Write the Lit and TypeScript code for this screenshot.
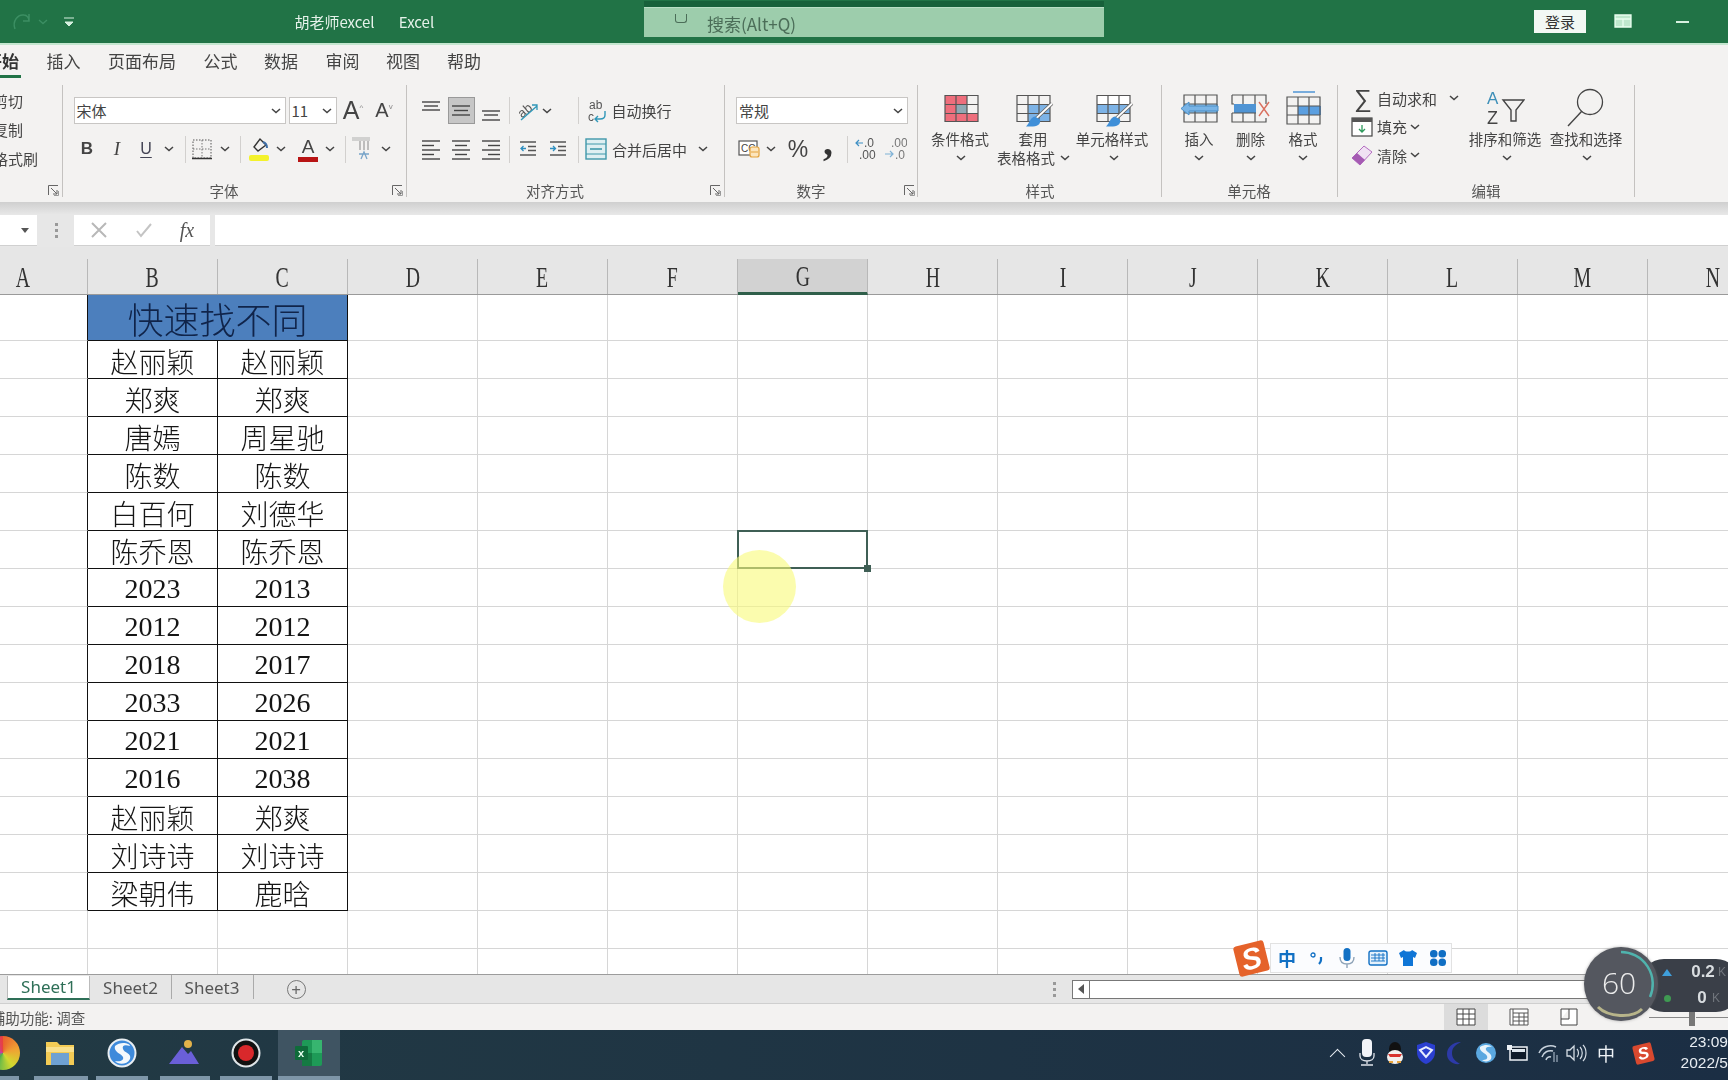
import { LitElement, html, svg, css } from "lit";
import { customElement } from "lit/decorators.js";

type Item = [number, number, unknown];

// lays items out in a flex row, each centred on a page x
const place = (origin: number, items: Item[]) => {
  let x = origin;
  return items.map(([c, w, t]) => {
    const gap = c - w / 2 - x;
    x = c + w / 2;
    return html`<span class="slot" style="margin-left:${gap}px;width:${w}px">${t}</span>`;
  });
};

const chev = html`<svg width="10" height="6" viewBox="0 0 10 6"><path d="M1 1l4 3.6L9 1" fill="none" stroke="#444" stroke-width="1.5"/></svg>`;
const launcher = html`<svg width="11" height="11" viewBox="0 0 11 11"><path d="M.5 10V.5H10M3 3l6 6M9 5v4H5" fill="none" stroke="#666"/><path d="M10.5 6v4.500H6" fill="none" stroke="#999"/></svg>`;

const lines = (ys: number[], xs: [number, number][], color = "#444") => html`<svg width="24" height="25" viewBox="0 0 24 25">
  ${ys.map((y, i) => svg`<path d="M${xs[i][0]} ${y}H${xs[i][1]}" stroke=${color} stroke-width="1.4"/>`)}
</svg>`;
const full: [number, number] = [3, 21];
const alTop = lines([4, 8, 12], [full, [5, 19], full]);
const alMid = lines([8, 12.5, 17], [full, [5, 19], full]);
const alBot = lines([13, 17, 22], [full, [5, 19], full]);
const alLeft = lines([4, 8.500, 13, 17.500, 22], [[3, 21], [3, 15], [3, 21], [3, 15], [3, 21]]);
const alCenter = lines([4, 8.500, 13, 17.500, 22], [[3, 21], [6, 18], [3, 21], [6, 18], [3, 21]]);
const alRight = lines([4, 8.500, 13, 17.500, 22], [[3, 21], [9, 21], [3, 21], [9, 21], [3, 21]]);
const indent = (flip: boolean) => html`<svg width="22" height="24" viewBox="0 0 22 24">
  <path d="M3 5H19M11 9.500H19M11 13.500H19M3 18H19" stroke="#555" stroke-width="1.300"/>
  <path d=${flip ? "M3 11.500H8M6 9l2.500 2.500L6 14" : "M9 11.500H4M6.500 9L4 11.500 6.500 14"} fill="none" stroke="#2f8fc0" stroke-width="1.300"/>
</svg>`;

const grid = (w = 35, h = 28, fills: unknown = "", over: unknown = "") => html`<svg class="spill" width=${w} height=${h} viewBox="0 0 35 28">
  ${fills}
  <path d="M1 1H34V27H1ZM1 10H34M1 19H34M12 1V27M23 1V27" fill="none" stroke="#555" stroke-width="1.200"/>
  ${over}
</svg>`;
const brush = svg`<path d="M36 9L19 25" stroke="#666" stroke-width="3.500"/><path d="M36 9L19 25" stroke="#fff" stroke-width="1.800"/><path d="M19 22c-5 1-5 6-9 10h7c6 0 8-4 7-7z" fill="#3f8fd8"/>`;

const condIcon = grid(35, 29, svg`<rect x="1" y="1" width="22" height="9" fill="#ee6e7c"/><rect x="1" y="10" width="11" height="9" fill="#ee6e7c"/><rect x="12" y="10" width="11" height="9" fill="#8fa9b4"/><rect x="1" y="19" width="33" height="8" fill="#ee6e7c"/>`);
const tableIcon = grid(35, 29, svg`<rect x="12" y="10" width="22" height="17" fill="#7db3e6"/>`, brush);
const cellIcon = grid(35, 29, svg`<rect x="1" y="1" width="33" height="18" fill="#7db3e6"/><rect x="1" y="1" width="33" height="9" fill="#fff"/><rect x="12" y="10" width="22" height="9" fill="#7db3e6"/>`, brush);
const insertIcon = html`<svg width="39" height="29" viewBox="0 0 39 29">
  <rect x="4" y="10" width="34" height="9" fill="#8dc0ea"/>
  <path d="M4 1H37V28H4ZM4 10H37M4 19H37M15 1V28M26 1V28" fill="none" stroke="#555" stroke-width="1.200"/>
  <path d="M1 14.500L9 8v4H38v5H9v4z" fill="#79b4e6" stroke="#4c8fc6"/>
</svg>`;
const deleteIcon = html`<svg width="39" height="29" viewBox="0 0 39 29">
  <rect x="3" y="10" width="22" height="9" fill="#4f94d4"/>
  <path d="M1 1H35V10M1 1V10H3M1 19V28H35V24M1 19H25M12 1V10M12 19V28M24 1V10M24 19V28" fill="none" stroke="#555" stroke-width="1.200"/>
  <path d="M28 8L38 22M38 8L28 22" stroke="#d9705f" stroke-width="1.400"/>
</svg>`;
const formatIcon = html`<svg width="35" height="35" viewBox="0 0 35 35">
  <path d="M7 1H29" stroke="#4f94d4" stroke-width="1.500"/>
  <rect x="12" y="15" width="23" height="9" fill="#5b9fe0"/>
  <path d="M1 6H34V33H1ZM1 15H34M1 24H34M12 6V33M23 6V33" fill="none" stroke="#555" stroke-width="1.200"/>
</svg>`;

const bucket = html`<svg width="26" height="28" viewBox="0 0 26 28">
  <path d="M8 12l6-8 6 6-8 6z" fill="none" stroke="#333" stroke-width="1.400"/>
  <path d="M17 7c3 1 4 3 4 6" fill="none" stroke="#3f6fa8" stroke-width="2"/>
  <rect x="3" y="20" width="20" height="6" rx="2" fill="#f4f22c"/>
</svg>`;
const borders = html`<svg width="22" height="22" viewBox="0 0 22 22">
  <path d="M2 2H20V20H2Z" fill="none" stroke="#555" stroke-dasharray="1.500 1.500"/>
  <path d="M11 2V20M2 11H20" stroke="#777" stroke-dasharray="1.500 1.500"/>
  <path d="M1 20.500H21" stroke="#333" stroke-width="1.500"/>
</svg>`;
const phonetic = html`<svg width="32" height="26" viewBox="0 0 32 26">
  <path d="M4 3H22" stroke="#bbb" stroke-width="4" opacity=".6"/>
  <path d="M12 5V14M16 5V14M20 5V14" stroke="#888"/>
  <path d="M11 18H21M13 23L16 16L19 23" fill="none" stroke="#7aa5c9" stroke-width="1.300"/>
</svg>`;
const orient = html`<svg width="24" height="24" viewBox="0 0 24 24">
  <text x="3" y="17" font-size="13" fill="#555" transform="rotate(-40 8 14)">ab</text>
  <path d="M5 21L21 7M16 6h5v5" fill="none" stroke="#2f97b8" stroke-width="1.300"/>
</svg>`;
const wrapIcon = html`<svg width="20" height="24" viewBox="0 0 20 24">
  <text x="2" y="10" font-size="12" fill="#555">ab</text>
  <text x="1" y="22" font-size="12" fill="#555">c</text>
  <path d="M18 12v4c0 3-2 4-5 4H8M11 17l-3 3 3 3" fill="none" stroke="#2f97b8" stroke-width="1.400"/>
</svg>`;
const mergeIcon = html`<svg width="22" height="22" viewBox="0 0 22 22">
  <rect x="1" y="1" width="20" height="20" fill="#dfeff2" stroke="#3f98aa" stroke-width="1.400"/>
  <path d="M1 6H21M1 16H21" stroke="#3f98aa"/><path d="M5 11H17" stroke="#3f98aa" stroke-width="1.600"/>
</svg>`;
const moneyIcon = html`<svg width="22" height="20" viewBox="0 0 22 20">
  <rect x="1" y="2" width="18" height="14" fill="#fff" stroke="#555" stroke-width="1.200"/>
  <text x="3" y="13" font-size="10" fill="#444">CC</text>
  <rect x="12" y="8" width="9" height="10" rx="2" fill="#fce5bd" stroke="#e3a13b" stroke-width="1.200"/>
  <path d="M13 13H20" stroke="#e3a13b"/>
</svg>`;
const incDec = html`<svg width="24" height="24" viewBox="0 0 24 24">
  <text x="10" y="10" font-size="12" fill="#555">.0</text><text x="5" y="22" font-size="12" fill="#555">.00</text>
  <path d="M9 6H2M5 3L2 6l3 3" fill="none" stroke="#3e8fc4" stroke-width="1.200"/>
</svg>`;
const decDec = html`<svg width="24" height="24" viewBox="0 0 24 24">
  <text x="8" y="10" font-size="12" fill="#777">.00</text><text x="12" y="22" font-size="12" fill="#777">.0</text>
  <path d="M2 17H10M7 14l3 3-3 3" fill="none" stroke="#7fb2d6" stroke-width="1.200"/>
</svg>`;
const fillIcon = html`<svg width="22" height="20" viewBox="0 0 22 20">
  <rect x="1" y="1" width="20" height="18" fill="#fff" stroke="#444" stroke-width="1.200"/><rect x="1" y="1" width="20" height="4" fill="#555"/>
  <path d="M11 8V15M8 12l3 3 3-3" fill="none" stroke="#2d9a5b" stroke-width="1.300"/>
</svg>`;
const eraser = html`<svg width="22" height="22" viewBox="0 0 22 22">
  <path d="M1 14L13 2l8 6L9 21z" fill="#f0e2f3" stroke="#b36cc0"/><path d="M1 14l5-5 8 7-5 5z" fill="#a55bb3"/>
</svg>`;
const sortIcon = html`<svg width="38" height="37" viewBox="0 0 38 37">
  <text x="0" y="14" font-size="17" fill="#3d8fb8">A</text>
  <text x="0" y="34" font-size="18" fill="#444">Z</text>
  <path d="M16 10H37L29 20V31H24V20Z" fill="none" stroke="#444" stroke-width="1.400"/>
</svg>`;
const lens = html`<svg width="38" height="40" viewBox="0 0 38 40">
  <circle cx="24" cy="14" r="12.500" fill="none" stroke="#444" stroke-width="1.300"/><path d="M16 23L2 38" stroke="#444" stroke-width="1.400"/>
</svg>`;

const folder = html`<svg width="30" height="28" viewBox="0 0 30 28"><path d="M1 3h11l3 3h14v20H1z" fill="#f3cb55"/><rect x="6" y="14" width="18" height="12" fill="#6fa1d2"/><path d="M1 8H29V13H1z" fill="#f9e08c"/></svg>`;
const browser = html`<svg width="30" height="32" viewBox="0 0 30 32"><circle cx="15" cy="16" r="13.500" fill="#3e8adb" stroke="#e9eef2" stroke-width="2"/><path d="M8 9c5-5 15-3 15 0-6-2-8 0-7 3 1 4 9 4 7 10-3 6-12 6-15 2 6 1 9-1 8-4S6 15 8 9z" fill="#f4f8fc"/></svg>`;
const mountain = html`<svg width="30" height="30" viewBox="0 0 30 30"><path d="M0 26L13 9l6 7 3-3 8 13z" fill="#6a5fd8"/><circle cx="19" cy="6" r="4" fill="#e2b14a"/></svg>`;
const record = html`<svg width="30" height="30" viewBox="0 0 30 30"><circle cx="15" cy="15" r="13.500" fill="#111" stroke="#dfe5e8" stroke-width="2"/><circle cx="15" cy="15" r="8" fill="#d9282b"/></svg>`;
const excel = html`<svg width="30" height="30" viewBox="0 0 30 30"><rect x="8" y="2" width="20" height="26" rx="2" fill="#1e9a57"/><path d="M18 2H28V15H18z" fill="#37b56f"/><path d="M8 15H18V28H8z" fill="#157a43"/><rect x="1" y="8" width="13" height="14" rx="1" fill="#0f6b3a"/><text x="4" y="19" font-size="11" font-weight="700" fill="#e9fff1">x</text></svg>`;

const trayMic = html`<svg width="16" height="30" viewBox="0 0 16 30"><rect x="3" y="1" width="10" height="18" rx="4" fill="#f2f4f8"/><path d="M1 15v3c0 3 3 5 7 5s7-2 7-5v-3M8 23v3M2 27H14" fill="none" stroke="#dfe3ea" stroke-width="1.300"/></svg>`;
const qq = html`<svg width="20" height="24" viewBox="0 0 20 24"><ellipse cx="10" cy="8" rx="6" ry="7" fill="#111"/><ellipse cx="10" cy="16" rx="8" ry="7" fill="#f4f0ee"/><path d="M3 13h14l-2 3H5z" fill="#d8332e"/><path d="M8 21h-4M16 21h-4" stroke="#e7a33b" stroke-width="2"/></svg>`;
const shield = html`<svg width="22" height="24" viewBox="0 0 22 24"><path d="M11 1l9 3v7c0 6-4 10-9 12C6 21 2 17 2 11V4z" fill="#2b3fd0"/><path d="M5 9l6 7 6-7-6-3z" fill="none" stroke="#e8ecff" stroke-width="2"/></svg>`;
const moon = html`<svg width="24" height="26" viewBox="0 0 24 26"><path d="M16 2C7 2 2 8 2 14s5 11 13 10c-5-3-8-6-8-11s3-8 9-11z" fill="#2d3aa8"/></svg>`;
const globe = html`<svg width="24" height="24" viewBox="0 0 24 24"><circle cx="12" cy="12" r="10" fill="#5ba8e0"/><path d="M6 6c5-3 10-2 12 0-5-1-7 1-6 3 2 3 7 4 5 9-2 3-7 3-9 1 4 0 6-1 5-4S5 11 6 6z" fill="#eaf4fb"/></svg>`;
const card = html`<svg width="22" height="16" viewBox="0 0 22 16"><rect x="4" y="2" width="17" height="13" fill="#0f1a28" stroke="#eef2f6" stroke-width="1.500"/><rect x="6" y="4" width="13" height="3" fill="#dfe6ec"/><rect x="1" y="0" width="5" height="5" fill="#eef2f6"/></svg>`;
const wifi = html`<svg width="22" height="20" viewBox="0 0 22 20"><path d="M2 10a13 13 0 0 1 17-6M5 14a9 9 0 0 1 11-6M9 17a4 4 0 0 1 5-3" fill="none" stroke="#c8d2dc" stroke-width="1.500"/><path d="M17 9V19M20 12V19" stroke="#8595a5" stroke-width="1.500"/></svg>`;
const speaker = html`<svg width="22" height="20" viewBox="0 0 22 20"><path d="M2 7H5L9 3V17L5 13H2Z" fill="none" stroke="#d4dce4" stroke-width="1.300"/><path d="M12 6c2 2 2 6 0 8M15 4c3 3 3 9 0 12M18 2c4 4 4 12 0 16" fill="none" stroke="#d4dce4" stroke-width="1.200"/></svg>`;

const logoS = (size: string) => html`<span class="s-logo ${size}"><span>S</span></span>`;

const COLS = "ABCDEFGHIJKLMN".split("");
const ROWS: [string, string][] = [
  ["赵丽颖", "赵丽颖"],
  ["郑爽", "郑爽"],
  ["唐嫣", "周星驰"],
  ["陈数", "陈数"],
  ["白百何", "刘德华"],
  ["陈乔恩", "陈乔恩"],
  ["2023", "2013"],
  ["2012", "2012"],
  ["2018", "2017"],
  ["2033", "2026"],
  ["2021", "2021"],
  ["2016", "2038"],
  ["赵丽颖", "郑爽"],
  ["刘诗诗", "刘诗诗"],
  ["梁朝伟", "鹿晗"],
];

@customElement("app-root")
export class AppRoot extends LitElement {
  static styles = css`
    :host {
      display: block;
      width: 1728px;
      height: 1080px;
      overflow: hidden;
      position: relative;
      background: #fff;
      font-family: "Noto Sans CJK SC", "Liberation Sans", sans-serif;
      color: #444;
    }
    svg text { font-family: "Liberation Sans", sans-serif; }
    .spill { overflow: visible; }
    .app { display: flex; flex-direction: column; width: 1728px; height: 1080px; filter: blur(.3px); }
    .strip { display: flex; align-items: center; flex: none; }
    .slot { display: flex; align-items: center; justify-content: center; flex: none; white-space: nowrap; position: relative; }

    .titlebar { height: 43px; background: #217346; color: #e6f2ea; font-size: 15px; flex: none; }
    .edge { height: 2px; background: #c4e6cf; flex: none; }
    .search { height: 30px; width: 100%; background: #9dcdac; color: #4b6d58; font-size: 17px; justify-content: flex-start; display: flex; align-items: center; box-shadow: 0 -6px 0 #17603a; border-top: 1px solid #b9dec5; box-sizing: border-box; }
    .search span { margin-left: 20px; padding-top: 3px; }
    .search i { display: block; width: 10px; height: 8px; border: 1.500px solid #4b6d58; border-top: 0; margin: -8px 0 0 31px; border-radius: 0 0 3px 3px; }
    .login { width: 100%; height: 23px; background: #f2f8f4; color: #333; display: flex; align-items: center; justify-content: center; }

    .ribbon { height: 157px; background: #f3f2f1; flex: none; }
    .tabs { height: 30px; font-size: 17px; color: #444; }
    .tab-on { font-weight: 700; color: #333; position: relative; }
    .tab-on::after { content: ""; position: absolute; left: 0; right: -2px; bottom: -5px; height: 3px; background: #217346; }
    .groups { display: flex; margin-top: 10px; height: 112px; font-size: 15px; }
    .group { display: flex; flex-direction: column; flex: none; box-sizing: border-box; height: 112px; border-right: 1px solid #c4c2c0; }
    .foot { height: 16px; margin-top: auto; margin-bottom: -1px; font-size: 14.500px; color: #555; }
    .clip { display: flex; flex-direction: column; margin-left: -7px; gap: 9px; padding-top: 6px; line-height: 20px; }
    .r1 { height: 27px; margin-top: 12px; }
    .r2 { height: 26px; margin-top: 12px; }
    .sel { box-sizing: border-box; width: 100%; height: 27px; background: #fff; border: 1px solid #c8c6c4; display: flex; align-items: center; justify-content: space-between; padding: 0 4px 0 2px; color: #444; font-size: 15px; }
    .on { width: 27px; height: 27px; background: #c6c6c6; border: 1px solid #999; box-sizing: border-box; display: flex; align-items: center; justify-content: center; }
    .vsep { display: block; width: 1px; height: 27px; background: #d2d0ce; }
    .big-a { font-family: "Liberation Sans", sans-serif; font-size: 25px; color: #444; }
    .small-a { font-family: "Liberation Sans", sans-serif; font-size: 20px; color: #444; }
    sup { font-size: 8px; line-height: 0; color: #888; }
    .b { font-family: "Liberation Sans", sans-serif; font-weight: 700; font-size: 17px; color: #444; }
    .i { font-family: "Liberation Serif", serif; font-style: italic; font-size: 19px; color: #444; }
    .u { font-family: "Liberation Sans", sans-serif; font-size: 16px; color: #445; text-decoration: underline; text-underline-offset: 3px; }
    .color-a { display: flex; flex-direction: column; align-items: center; font-family: "Liberation Sans", sans-serif; font-size: 19px; line-height: 20px; width: 22px; color: #444; }
    .color-a i { display: block; width: 20px; height: 5px; background: #b81414; }
    .pct { font-family: "Liberation Sans", sans-serif; font-size: 23px; color: #444; }
    .comma { font-family: "Liberation Serif", serif; font-weight: 700; font-size: 40px; line-height: 26px; height: 26px; margin-top: -14px; color: #333; }
    .with-icon { display: flex; align-items: center; gap: 5px; color: #444; }
    .icons { height: 29px; margin-top: 9px; }
    .text1 { height: 19px; margin-top: 6px; font-size: 14.500px; line-height: 19px; }
    .text2 { height: 19px; font-size: 14.500px; line-height: 19px; }
    .split { display: flex; flex: 1; }
    .edit-left { display: flex; flex-direction: column; gap: 2.500px; width: 122px; flex: none; }
    .edit-left .strip { height: 26px; }
    .edit-right { display: flex; flex-direction: column; }
    .edit-icons { height: 40px; margin-top: 3px; }
    .edit-right .text1 { margin-top: 1px; }
    .sigma { font-family: "Liberation Sans", sans-serif; font-size: 25px; color: #444; }

    .shade { height: 13px; flex: none; background: linear-gradient(#cfcfcf, #e8e8e8); }
    .formula { height: 32px; background: #e7e7e7; flex: none; align-items: stretch; }
    .formula .slot { height: 31px; }
    .fbox { width: 100%; height: 100%; background: #fff; border-bottom: 1px solid #d0d0d0; box-sizing: border-box; display: flex; align-items: center; justify-content: center; }
    .tri { display: block; width: 0; height: 0; border: 4px solid transparent; border-top: 5px solid #555; border-bottom: 0; margin-left: 32px; }
    .fmarks { margin: 0 28px; }
    .dots { display: flex; flex-direction: column; gap: 3px; }
    .dots i { display: block; width: 3px; height: 3px; background: #999; }
    .fx { font-family: "Liberation Serif", serif; font-style: italic; font-size: 20px; color: #555; }

    .cols { display: grid; grid-template-columns: 88px repeat(13, 130px); height: 48px; padding-top: 12px; box-sizing: border-box; background: #e6e6e6; flex: none; border-bottom: 1px solid #9a9a9a; width: 1777px; }
    .hd { display: flex; align-items: center; justify-content: center; border-right: 1px solid #b8b8b8; box-sizing: border-box; }
    .hd.first { justify-content: flex-start; padding-left: 12px; }
    .hd.cur { background: #d2d2d2; border-bottom: 3px solid #2f5f4a; margin-bottom: -1px; }
    .letter { display: inline-block; font-family: "Liberation Serif", serif; font-size: 30px; line-height: 30px; transform: scaleX(.66); color: #333; }

    .sheet { position: relative; height: 679px; overflow: hidden; flex: none; width: 1728px; }
    .cells { display: grid; grid-template-columns: 88px repeat(13, 130px); grid-template-rows: 46px; grid-auto-rows: 38px; width: 1777px; }
    .c { box-sizing: border-box; border-right: 1px solid #d6d6d6; border-bottom: 1px solid #d6d6d6; display: flex; align-items: center; justify-content: center; font-family: "Liberation Serif", "Noto Sans CJK SC", serif; font-weight: 300; font-size: 28px; color: #151515; padding-top: 3px; }
    .c.title { grid-column: span 2; background: #4c7fbd; font-size: 36px; color: #10244a; border-bottom-color: #111; padding-top: 0; }
    .c.t { border-right-color: #111; border-bottom-color: #111; }
    .c.left { border-right-color: #111; }
    .c.cursor { position: relative; z-index: 2; }
    .c.cursor::after { content: ""; position: absolute; inset: -1px -1px -1px -1px; border: 2px solid #3f5f55; }
    .c.cursor::before { content: ""; position: absolute; right: -4px; bottom: -4px; width: 7px; height: 7px; background: #3f5f55; z-index: 1; }
    .pointer { position: absolute; left: 723px; top: 255px; width: 73px; height: 73px; border-radius: 50%; background: rgba(248, 250, 120, .6); z-index: 3; }

    .tabbar { height: 30px; background: #e6e6e6; border-top: 1px solid #9c9c9c; border-bottom: 1px solid #cfcfcf; box-sizing: border-box; flex: none; font-family: "Noto Sans", sans-serif; font-size: 17px; color: #555; }
    .tab { height: 23px; margin-top: -4px; display: flex; align-items: center; justify-content: center; width: 100%; }
    .tab.active { background: #fff; color: #2e6f57; border-bottom: 2px solid #2e6f57; margin-top: -3px; height: 24px; border-left: 1px solid #bbb; border-right: 1px solid #bbb; box-sizing: border-box; }
    .tsep { display: block; width: 1px; height: 24px; background: #aaa; margin-top: -4px; }
    .plus { width: 19px; height: 19px; border: 1px solid #777; border-radius: 50%; display: flex; align-items: center; justify-content: center; font-size: 17px; line-height: 17px; color: #666; box-sizing: border-box; }
    .sbtn { width: 100%; height: 19px; background: #fff; border: 1.500px solid #777; box-sizing: border-box; display: flex; align-items: center; justify-content: center; }
    .sbtn i { width: 0; height: 0; border: 5px solid transparent; border-right: 6px solid #555; border-left: 0; }
    .track { width: 100%; height: 19px; background: #fff; border-top: 1.500px solid #777; border-bottom: 1.500px solid #777; box-sizing: border-box; }

    .status { height: 26px; background: #f3f2f1; flex: none; font-size: 14.500px; color: #555; }
    .view { width: 100%; height: 26px; display: flex; align-items: center; justify-content: center; }
    .view.active { background: #dcdcdc; }
    .slider { display: block; width: 100%; height: 1px; background: #888; }
    .thumb { display: block; width: 6px; height: 18px; background: #777; }

    .taskbar { height: 50px; flex: none; background: linear-gradient(90deg, #223a44, #1b2e44); display: flex; flex-direction: column; }
    .task-icons { height: 46px; }
    .task-icons .slot { height: 46px; }
    .runs { height: 4px; }
    .runs .slot { height: 4px; background: #7e96a8; }
    .active-app { width: 100%; height: 46px; background: #3f5462; display: flex; align-items: center; justify-content: center; }
    .chrome { width: 34px; height: 34px; border-radius: 50%; background: conic-gradient(#e8622e, #f0a033, #d2d92f, #4bb04f, #c63bb0, #e8403e); }
    .up { width: 10px; height: 10px; border-left: 1.500px solid #e8eef2; border-top: 1.500px solid #e8eef2; transform: rotate(45deg); margin-top: 6px; }
    .cn { font-size: 18px; color: #eef2f6; }
    .clock { display: flex; flex-direction: column; align-items: flex-end; width: 100%; font-family: "Liberation Sans", sans-serif; color: #e8edf2; font-size: 15.500px; line-height: 21px; margin-top: -3px; }

    .s-logo { display: flex; align-items: center; justify-content: center; background: #e5622a; transform: rotate(-14deg); color: #fff; font-family: "Liberation Sans", sans-serif; font-weight: 700; font-style: italic; }
    .s-logo.large { width: 31px; height: 31px; font-size: 30px; border-radius: 3px; }
    .s-logo.small { width: 19px; height: 19px; font-size: 17px; background: #d9492f; border-radius: 2px; }
    .sogou { position: absolute; left: 1270px; top: 943px; width: 182px; height: 30px; background: #fbfcfe; border: 1px solid #e2e2e2; box-sizing: border-box; z-index: 4; color: #0f6ec4; }
    .sogou .strip { height: 28px; }
    .sogou .logo { position: absolute; left: -35px; top: -1px; }
    .zh { font-size: 18px; font-weight: 700; color: #1170c4; }
    .pill { position: absolute; left: 1640px; top: 959px; width: 100px; height: 53px; border-radius: 24px; background: #3a3f48; z-index: 5; color: #d9dde0; font-family: "Liberation Sans", sans-serif; font-weight: 700; font-size: 17px; }
    .pill .strip { height: 26px; }
    .faint { font-size: 12px; font-weight: 400; color: #70757c; }
    .dot-up { width: 0; height: 0; border: 5px solid transparent; border-bottom: 7px solid #3f9fdc; border-top: 0; }
    .dot-g { width: 7px; height: 7px; border-radius: 50%; background: #3f9a52; }
    .gauge { position: absolute; left: 1584px; top: 947px; width: 74px; height: 74px; border-radius: 50%; background: #54575f; z-index: 6; box-shadow: 0 0 3px rgba(90, 90, 90, .5); display: flex; align-items: center; justify-content: center; color: #ececec; font-family: "Open Sans", sans-serif; font-weight: 300; font-size: 30px; }
    .gauge svg { position: absolute; inset: 0; }
    .gauge span { margin-left: -4px; margin-top: -3px; }
  `;

  private group(l: number, r: number, body: unknown, c: number, label: string, launch?: number) {
    const foot: Item[] = [[c, 80, label]];
    if (launch) foot.push([launch, 12, launcher]);
    return html`<div class="group" style="width:${r - l}px">
      ${body}
      <div class="strip foot">${place(l, foot)}</div>
    </div>`;
  }

  private renderRibbon() {
    const font = html`
      <div class="strip r1">${place(63, [
        [179.5, 212, html`<span class="sel">宋体${chev}</span>`],
        [312.5, 48, html`<span class="sel">11${chev}</span>`],
        [353, 24, html`<span class="big-a">A<sup>^</sup></span>`],
        [384, 22, html`<span class="small-a">A<sup>v</sup></span>`],
      ])}</div>
      <div class="strip r2">${place(63, [
        [87, 18, html`<span class="b">B</span>`],
        [117, 16, html`<span class="i">I</span>`],
        [146, 18, html`<span class="u">U</span>`],
        [169, 10, chev],
        [185, 1, html`<span class="vsep"></span>`],
        [202, 22, borders],
        [225, 10, chev],
        [240, 1, html`<span class="vsep"></span>`],
        [259, 26, bucket],
        [281, 10, chev],
        [308, 22, html`<span class="color-a">A<i></i></span>`],
        [330, 10, chev],
        [345, 1, html`<span class="vsep"></span>`],
        [364, 32, phonetic],
        [386, 10, chev],
      ])}</div>`;
    const align = html`
      <div class="strip r1">${place(407, [
        [431, 24, alTop],
        [461, 27, html`<span class="on">${alMid}</span>`],
        [491, 24, alBot],
        [509.5, 1, html`<span class="vsep"></span>`],
        [528, 24, orient],
        [547, 10, chev],
        [578, 1, html`<span class="vsep"></span>`],
        [629, 84, html`<span class="with-icon">${wrapIcon}自动换行</span>`],
      ])}</div>
      <div class="strip r2">${place(407, [
        [431, 24, alLeft],
        [461, 24, alCenter],
        [491, 24, alRight],
        [509.5, 1, html`<span class="vsep"></span>`],
        [528, 22, indent(false)],
        [558, 22, indent(true)],
        [578, 1, html`<span class="vsep"></span>`],
        [636, 102, html`<span class="with-icon">${mergeIcon}合并后居中</span>`],
        [703, 10, chev],
      ])}</div>`;
    const number = html`
      <div class="strip r1">${place(725, [[822, 172, html`<span class="sel">常规${chev}</span>`]])}</div>
      <div class="strip r2">${place(725, [
        [749, 22, moneyIcon],
        [771, 10, chev],
        [798, 24, html`<span class="pct">%</span>`],
        [828, 14, html`<span class="comma">,</span>`],
        [847, 1, html`<span class="vsep"></span>`],
        [866, 24, incDec],
        [895, 24, decDec],
      ])}</div>`;
    const styles = html`
      <div class="strip icons">${place(918, [[961, 35, condIcon], [1033, 35, tableIcon], [1113, 35, cellIcon]])}</div>
      <div class="strip text1">${place(918, [[960, 64, "条件格式"], [1033, 36, "套用"], [1112, 78, "单元格样式"]])}</div>
      <div class="strip text2">${place(918, [[961, 10, chev], [1026, 64, "表格格式"], [1065, 10, chev], [1114, 10, chev]])}</div>`;
    const cells = html`
      <div class="strip icons">${place(1162, [[1199, 39, insertIcon], [1250.5, 39, deleteIcon], [1303, 35, formatIcon]])}</div>
      <div class="strip text1">${place(1162, [[1199, 34, "插入"], [1250.5, 34, "删除"], [1303, 34, "格式"]])}</div>
      <div class="strip text2">${place(1162, [[1199, 10, chev], [1250.5, 10, chev], [1303, 10, chev]])}</div>`;
    const edit = html`<div class="split">
      <div class="edit-left">
        <div class="strip">${place(1338, [[1363, 22, html`<span class="sigma">∑</span>`], [1407, 62, "自动求和"], [1454, 10, chev]])}</div>
        <div class="strip">${place(1338, [[1362, 22, fillIcon], [1392, 32, "填充"], [1415, 10, chev]])}</div>
        <div class="strip">${place(1338, [[1362, 22, eraser], [1392, 32, "清除"], [1415, 10, chev]])}</div>
      </div>
      <div class="edit-right">
        <div class="strip edit-icons">${place(1460, [[1506, 38, sortIcon], [1585, 38, lens]])}</div>
        <div class="strip text1">${place(1460, [[1505, 75, "排序和筛选"], [1586, 75, "查找和选择"]])}</div>
        <div class="strip text2">${place(1460, [[1507, 10, chev], [1587, 10, chev]])}</div>
      </div>
    </div>`;

    return html`<div class="ribbon">
      <div class="strip tabs">${place(0, [
        [2, 34, html`<span class="tab-on">开始</span>`],
        [63.5, 34, "插入"],
        [142, 68, "页面布局"],
        [220.5, 34, "公式"],
        [281, 34, "数据"],
        [342.5, 34, "审阅"],
        [403, 34, "视图"],
        [464, 34, "帮助"],
      ])}</div>
      <div class="groups">
        ${this.group(0, 63, html`<div class="clip"><span>剪切</span><span>复制</span><span>格式刷</span></div>`, -200, "", 53)}
        ${this.group(63, 407, font, 224, "字体", 397)}
        ${this.group(407, 725, align, 555, "对齐方式", 715)}
        ${this.group(725, 918, number, 811, "数字", 909)}
        ${this.group(918, 1162, styles, 1040, "样式")}
        ${this.group(1162, 1338, cells, 1249, "单元格")}
        ${this.group(1338, 1635, edit, 1486, "编辑")}
      </div>
    </div>`;
  }

  private renderSheet() {
    const rest = COLS.slice(3);
    const blank = (extra = "") => rest.map(() => html`<div class="c ${extra}"></div>`);
    return html`<div class="sheet">
      <div class="cells">
        <div class="c left"></div>
        <div class="c title t">快速找不同</div>
        ${blank()}
        ${ROWS.map(([b, c], r) => html`
          <div class="c left"></div>
          <div class="c t">${b}</div>
          <div class="c t">${c}</div>
          ${rest.map((col) => html`<div class="c ${r === 5 && col === "G" ? "cursor" : ""}"></div>`)}
        `)}
        ${[0, 1, 2].map(() => html`<div class="c"></div><div class="c"></div><div class="c"></div>${blank()}`)}
      </div>
      <div class="pointer"></div>
    </div>`;
  }

  render() {
    return html`<div class="app">
      <div class="strip titlebar">${place(0, [
        [22, 22, html`<svg width="22" height="22" viewBox="0 0 22 22"><path d="M4 18C1 10 7 3 13 4c3 0 5 3 5 6M18 3v7h-6" fill="none" stroke="#3c8f63" stroke-width="1.500"/></svg>`],
        [43, 10, html`<svg width="10" height="6" viewBox="0 0 10 6"><path d="M1 1l4 3.600L9 1" fill="none" stroke="#3c8f63" stroke-width="1.300"/></svg>`],
        [69, 12, html`<svg width="12" height="10" viewBox="0 0 12 10"><path d="M1 1H11M2 5l4 4 4-4z" fill="#d6f0df" stroke="#d6f0df"/></svg>`],
        [334.5, 82, "胡老师excel"],
        [416.5, 36, "Excel"],
        [874, 460, html`<div class="search"><i></i><span>搜索(Alt+Q)</span></div>`],
        [1560, 52, html`<span class="login">登录</span>`],
        [1623, 18, html`<svg width="18" height="18" viewBox="0 0 18 18"><path d="M1 2H17V14H1ZM1 6H17M9 6V14" fill="#bfe8cd" stroke="#eafff0" stroke-width="1.300"/></svg>`],
        [1682, 13, html`<svg width="13" height="2" viewBox="0 0 13 2"><path d="M0 1H13" stroke="#d8f0e0" stroke-width="2"/></svg>`],
      ])}</div>
      <div class="edge"></div>
      ${this.renderRibbon()}
      <div class="shade"></div>
      <div class="strip formula">${place(0, [
        [8.5, 57, html`<span class="fbox"><span class="tri"></span></span>`],
        [56, 3, html`<span class="dots"><i></i><i></i><i></i></span>`],
        [142, 136, html`<span class="fbox">
          <svg width="18" height="18" viewBox="0 0 18 18"><path d="M2 2L16 16M16 2L2 16" stroke="#b8b8b8" stroke-width="2"/></svg>
          <svg class="fmarks" width="16" height="16" viewBox="0 0 16 16"><path d="M1 9l4 5L15 2" fill="none" stroke="#c4c4c4" stroke-width="2"/></svg>
          <span class="fx">fx</span></span>`],
        [971.5, 1513, html`<span class="fbox"></span>`],
      ])}</div>
      <div class="cols">
        ${COLS.map((l, i) => html`<div class="hd ${i === 0 ? "first" : ""} ${l === "G" ? "cur" : ""}"><span class="letter">${l}</span></div>`)}
      </div>
      ${this.renderSheet()}
      <div class="strip tabbar">${place(0, [
        [48.5, 83, html`<span class="tab active">Sheet1</span>`],
        [130.5, 62, html`<span class="tab">Sheet2</span>`],
        [171, 1, html`<span class="tsep"></span>`],
        [212, 62, html`<span class="tab">Sheet3</span>`],
        [253, 1, html`<span class="tsep"></span>`],
        [296, 19, html`<span class="plus">+</span>`],
        [1054, 3, html`<span class="dots"><i></i><i></i><i></i></span>`],
        [1080.5, 18, html`<span class="sbtn"><i></i></span>`],
        [1409.5, 640, html`<span class="track"></span>`],
      ])}</div>
      <div class="strip status">${place(0, [
        [38, 100, "辅助功能: 调查"],
        [1466, 44, html`<span class="view active"><svg width="20" height="18" viewBox="0 0 20 18"><path d="M1 1H19V17H1ZM1 6H19M1 11H19M7 1V17M13 1V17" fill="#fff" stroke="#444"/></svg></span>`],
        [1519, 44, html`<span class="view"><svg width="20" height="18" viewBox="0 0 20 18"><path d="M1 1H19V17H1ZM4 5H19M4 9H19M4 13H19M4 1V17M10 5V17M15 5V17" fill="#fff" stroke="#555"/></svg></span>`],
        [1569, 20, html`<svg width="18" height="18" viewBox="0 0 18 18"><path d="M1 1H17V17H1ZM1 11H9V1" fill="#fff" stroke="#444"/></svg>`],
        [1669, 40, html`<span class="slider"></span>`],
        [1692, 6, html`<span class="thumb"></span>`],
        [1712, 32, html`<span class="slider"></span>`],
      ])}</div>
      <div class="taskbar">
        <div class="strip task-icons">${place(0, [
          [3, 34, html`<span class="chrome"></span>`],
          [59.5, 30, folder],
          [122, 30, browser],
          [184, 30, mountain],
          [246, 30, record],
          [309, 62, html`<span class="active-app">${excel}</span>`],
          [1337, 12, html`<span class="up"></span>`],
          [1367, 16, trayMic],
          [1395, 20, qq],
          [1426, 22, shield],
          [1457, 24, moon],
          [1486, 24, globe],
          [1517, 22, card],
          [1548, 22, wifi],
          [1576, 22, speaker],
          [1606, 20, html`<span class="cn">中</span>`],
          [1643, 19, logoS("small")],
          [1692, 72, html`<span class="clock"><span>23:09</span><span>2022/5</span></span>`],
        ])}</div>
        <div class="strip runs">${place(0, [[8, 22, ""], [61, 54, ""], [122, 52, ""], [185, 50, ""], [246, 52, ""], [309, 62, ""]])}</div>
      </div>

      <div class="sogou">
        <span class="logo">${logoS("large")}</span>
        <div class="strip">${place(1271, [
          [1287, 20, html`<span class="zh">中</span>`],
          [1317, 16, html`<svg width="16" height="14" viewBox="0 0 16 14"><circle cx="4" cy="4" r="2" fill="none" stroke="#1170c4" stroke-width="1.300"/><path d="M12 6v3c0 2-1 3-2 4" fill="none" stroke="#1170c4" stroke-width="2.200"/></svg>`],
          [1347, 16, html`<svg width="16" height="22" viewBox="0 0 16 22"><rect x="4.500" y="1" width="7" height="13" rx="3.500" fill="#1170c4"/><path d="M1 10c0 5 3 7 7 7s7-2 7-7M8 17v4" fill="none" stroke="#8fa4b8" stroke-width="1.400"/></svg>`],
          [1378, 20, html`<svg width="20" height="16" viewBox="0 0 20 16"><rect x="1" y="1" width="18" height="14" rx="2" fill="#e4f1fc" stroke="#1170c4" stroke-width="1.400"/><path d="M3 5H17M3 8H17M3 11H17M7 3V11M11 3V11M15 3V11" stroke="#1170c4" stroke-width=".9"/></svg>`],
          [1408, 20, html`<svg width="20" height="18" viewBox="0 0 20 18"><path d="M6 1L1 4l2 5 2-1v9h10V8l2 1 2-5-5-3c-1 2-7 2-8 0z" fill="#0f75d6"/></svg>`],
          [1438, 18, html`<svg width="18" height="18" viewBox="0 0 18 18"><g fill="#0f6ec4"><rect x="1" y="1" width="7.500" height="7.500" rx="3.500"/><rect x="9.500" y="1" width="7.500" height="7.500" rx="3.500"/><rect x="1" y="9.500" width="7.500" height="7.500" rx="3.500"/><rect x="9.500" y="9.500" width="7.500" height="7.500" rx="3.500"/></g></svg>`],
        ])}</div>
      </div>
      <div class="pill">
        <div class="strip">${place(1640, [[1667, 10, html`<i class="dot-up"></i>`], [1703, 28, "0.2"], [1722, 12, html`<span class="faint">K</span>`]])}</div>
        <div class="strip">${place(1640, [[1667, 8, html`<i class="dot-g"></i>`], [1702, 12, "0"], [1716, 12, html`<span class="faint">K</span>`]])}</div>
      </div>
      <div class="gauge">
        <svg viewBox="0 0 74 74">
          <path d="M37 5A32 32 0 0 1 66 50" fill="none" stroke="#4fb3ad" stroke-width="2.500"/>
          <path d="M14 60C24 70 48 72 58 62" fill="none" stroke="#b7b48a" stroke-width="3"/>
        </svg>
        <span>60</span>
      </div>
    </div>`;
  }
}
